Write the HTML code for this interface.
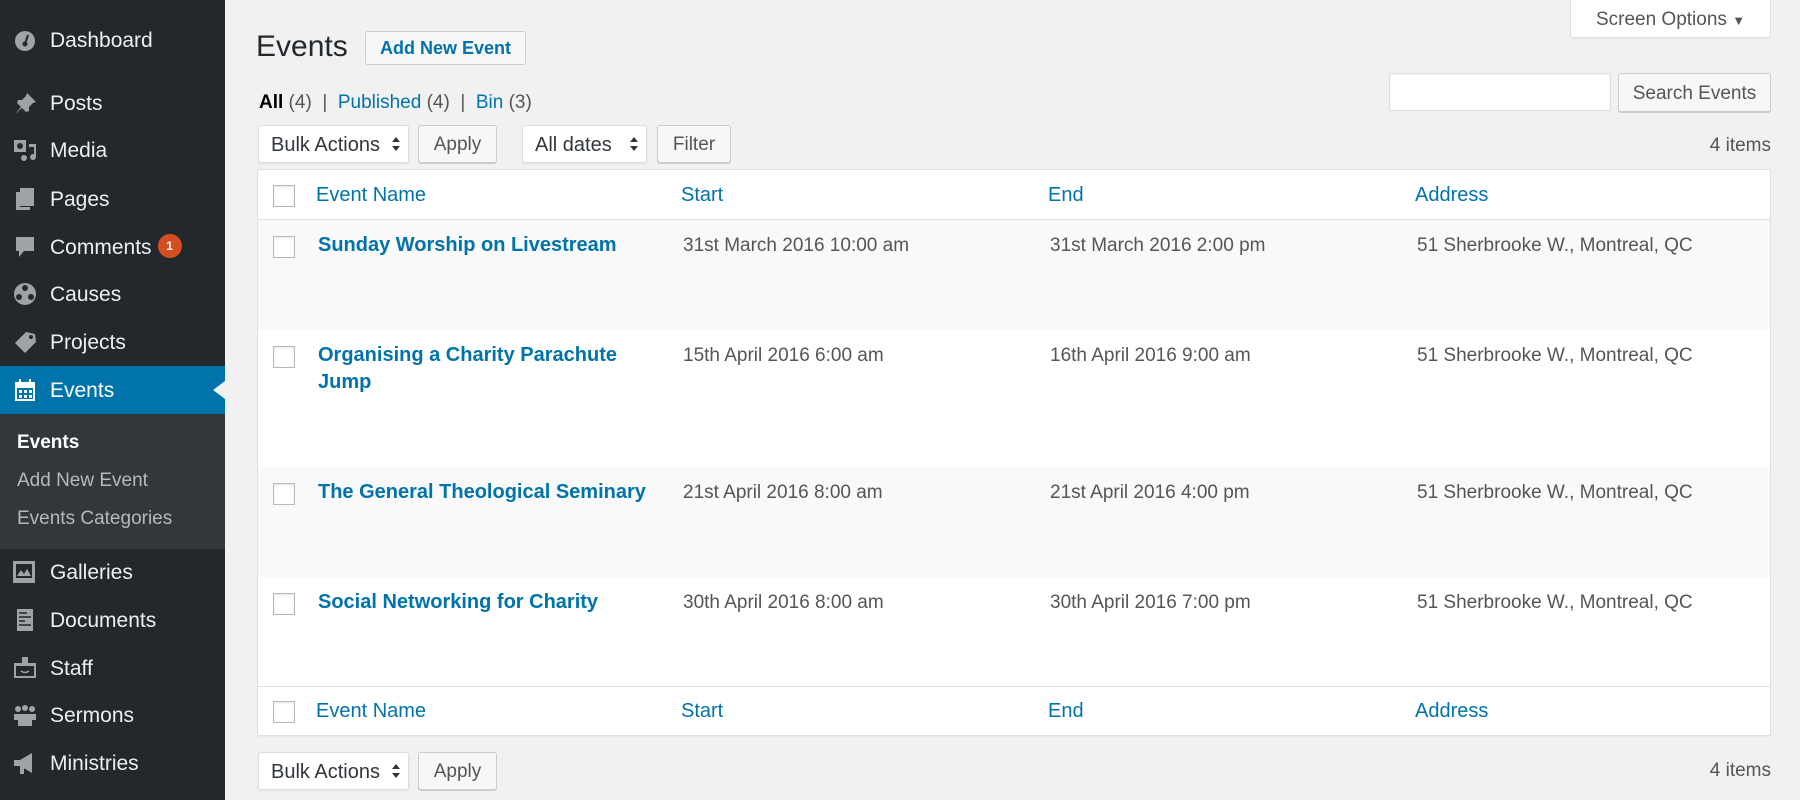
<!DOCTYPE html>
<html><head><meta charset="utf-8"><style>
*{box-sizing:border-box;margin:0;padding:0}
body{width:1800px;height:800px;overflow:hidden;background:#f1f1f1;font-family:"Liberation Sans",sans-serif;font-size:15px;color:#444;position:relative}
#side{position:absolute;left:0;top:0;width:225px;height:800px;background:#23282d}
.mi{position:absolute;left:0;width:225px;height:48px;color:#eee;font-size:21px;line-height:50px;padding-left:50px}
.mi .ic{position:absolute;left:13px;top:13px;width:24px;height:22px;color:#9ea3a8}
.cur{background:#0073aa;color:#fff}
.cur .ic{color:#fff}
#sub{position:absolute;left:0;top:414px;width:225px;height:135px;background:#32373c}
.si{position:absolute;left:17px;font-size:19px;color:#b4b9be}
.badge{display:inline-block;width:24px;height:24px;border-radius:12px;background:#d54e21;color:#fff;font-size:12px;font-weight:bold;text-align:center;line-height:24px;vertical-align:middle;margin-left:6px;position:relative;top:-2px}
a{color:#0073aa;text-decoration:none}
.btn{position:absolute;border:1px solid #ccc;background:#f7f7f7;border-radius:3px;box-shadow:0 1px 0 #ccc;color:#555;font-size:19px;text-align:center}
.sel{position:absolute;border:1px solid #ddd;background:#fff;border-radius:3px;box-shadow:0 1px 2px rgba(0,0,0,.07);color:#32373c;font-size:20px;padding-left:12px}
.sel:after{content:"";position:absolute;right:8px;top:50%;margin-top:-7px;border-left:4px solid transparent;border-right:4px solid transparent;border-bottom:5px solid #333}
.sel:before{content:"";position:absolute;right:8px;top:50%;margin-top:2px;border-left:4px solid transparent;border-right:4px solid transparent;border-top:5px solid #333}
#tbl{position:absolute;left:257px;top:169px;width:1514px;height:567px;background:#fff;border:1px solid #e1e1e1;box-shadow:0 1px 1px rgba(0,0,0,.04)}
.row{position:absolute;left:0;width:1512px}
.cb{position:absolute;left:15px;width:22px;height:22px;border:1px solid #b4b9be;background:#fff;box-shadow:inset 0 1px 2px rgba(0,0,0,.1)}
.c{position:absolute;font-size:19px}
.hd{color:#0073aa;font-size:20px}
.t{font-weight:bold;color:#0073aa;font-size:20px;line-height:27px;width:330px}
.d{color:#555;font-size:19px}
</style></head><body>
<div id="side">
 <div class="mi" style="top:16px">Dashboard<svg class="ic" viewBox="0 0 24 22"><circle cx="12" cy="12" r="10" fill="currentColor"/><circle cx="12" cy="15" r="2.5" fill="#23282d"/><path d="M12 15L15 6" stroke="#23282d" stroke-width="2"/></svg></div>
 <div class="mi" style="top:79px">Posts<svg class="ic" viewBox="0 0 24 22"><path d="M14 1l9 9-3 1-4 4 0 4-3 1-4-4-7 6 6-7-4-4 1-3 4 0 4-4z" fill="currentColor"/></svg></div>
 <div class="mi" style="top:126px">Media<svg class="ic" viewBox="0 0 24 22"><rect x="1" y="1" width="12" height="12" fill="currentColor"/><circle cx="7" cy="7" r="3" fill="#23282d"/><circle cx="11" cy="19" r="3" fill="currentColor"/><circle cx="20" cy="18" r="3" fill="currentColor"/><rect x="16" y="5" width="6" height="3" fill="currentColor"/><rect x="21" y="5" width="2" height="13" fill="currentColor"/></svg></div>
 <div class="mi" style="top:175px">Pages<svg class="ic" viewBox="0 0 24 22"><rect x="7" y="0" width="14" height="18" fill="currentColor"/><rect x="3" y="4" width="4" height="18" fill="currentColor"/><rect x="3" y="19" width="14" height="3" fill="currentColor"/></svg></div>
 <div class="mi" style="top:223px">Comments<span class="badge">1</span><svg class="ic" viewBox="0 0 24 22"><path d="M3 1h18v14h-10l-5 6v-6h-3z" fill="currentColor"/></svg></div>
 <div class="mi" style="top:270px">Causes<svg class="ic" viewBox="0 0 24 22"><circle cx="12" cy="11" r="11" fill="currentColor"/><circle cx="12" cy="5" r="3" fill="#23282d"/><circle cx="6" cy="14" r="3" fill="#23282d"/><circle cx="18" cy="14" r="3" fill="#23282d"/></svg></div>
 <div class="mi" style="top:318px">Projects<svg class="ic" viewBox="0 0 24 22"><path d="M2 12L13 1l9 2 1 8-11 11z" fill="currentColor"/><circle cx="18" cy="6" r="2" fill="#23282d"/></svg></div>
 <div class="mi cur" style="top:366px">Events<svg class="ic" viewBox="0 0 24 22"><rect x="2" y="3" width="20" height="19" fill="currentColor"/><rect x="4" y="9" width="16" height="11" fill="#0073aa"/><path d="M6 11h3v3h-3zM11 11h3v3h-3zM16 11h3v3h-3zM6 16h3v3h-3zM11 16h3v3h-3zM16 16h3v3h-3z" fill="#fff"/><rect x="6" y="0" width="2" height="5" fill="#fff"/><rect x="16" y="0" width="2" height="5" fill="#fff"/></svg></div>
 <div style="position:absolute;left:213px;top:381px;border-top:9px solid transparent;border-bottom:9px solid transparent;border-right:12px solid #f1f1f1"></div>
 <div id="sub">
  <div class="si" style="top:18px;color:#fff;font-weight:bold">Events</div>
  <div class="si" style="top:56px">Add New Event</div>
  <div class="si" style="top:94px">Events Categories</div>
 </div>
 <div class="mi" style="top:548px">Galleries<svg class="ic" viewBox="0 0 24 22"><rect x="0" y="0" width="22" height="22" fill="currentColor"/><rect x="3" y="3" width="16" height="14" fill="#23282d"/><path d="M4 15l4-6 3 4 3-5 4 7z" fill="currentColor"/></svg></div>
 <div class="mi" style="top:596px">Documents<svg class="ic" viewBox="0 0 24 22"><rect x="4" y="0" width="16" height="22" fill="currentColor"/><path d="M6 4h8M6 8h12M6 12h6M6 16h12" stroke="#23282d" stroke-width="1.5"/></svg></div>
 <div class="mi" style="top:644px">Staff<svg class="ic" viewBox="0 0 24 22"><rect x="1" y="6" width="22" height="15" fill="currentColor"/><rect x="3" y="9" width="18" height="10" fill="#23282d"/><rect x="9" y="0" width="6" height="8" fill="currentColor"/><path d="M8 14q4 3 8 0" stroke="currentColor" fill="none" stroke-width="1.5"/></svg></div>
 <div class="mi" style="top:691px">Sermons<svg class="ic" viewBox="0 0 24 22"><circle cx="5" cy="5" r="3" fill="currentColor"/><circle cx="12" cy="4" r="3" fill="currentColor"/><circle cx="19" cy="5" r="3" fill="currentColor"/><path d="M1 10h22v6h-4v6h-14v-6h-4z" fill="currentColor"/></svg></div>
 <div class="mi" style="top:739px">Ministries<svg class="ic" viewBox="0 0 24 22"><path d="M1 8h6l12-7v20l-12-7h-6z" fill="currentColor"/><rect x="7" y="14" width="4" height="8" fill="currentColor"/></svg></div>
</div>

<div style="position:absolute;left:256px;top:30px;font-size:30px;color:#23282d">Events</div>
<div class="btn" style="left:365px;top:31px;width:161px;height:34px;line-height:32px;color:#0073aa;font-weight:bold;font-size:18px;box-shadow:none;border-color:#ccc">Add New Event</div>

<div class="btn" style="left:1570px;top:-3px;width:201px;height:41px;line-height:44px;background:#fff;border-color:#ddd;box-shadow:0 1px 1px rgba(0,0,0,.04)">Screen Options <span style="font-size:13px">▼</span></div>

<div style="position:absolute;left:259px;top:92px;font-size:19px;color:#555"><b style="color:#000">All</b> (4) &nbsp;| &nbsp;<a>Published</a> (4) &nbsp;| &nbsp;<a>Bin</a> (3)</div>

<div style="position:absolute;left:1389px;top:73px;width:222px;height:38px;background:#fff;border:1px solid #ddd;box-shadow:inset 0 1px 2px rgba(0,0,0,.07)"></div>
<div class="btn" style="left:1618px;top:73px;width:153px;height:39px;line-height:39px">Search Events</div>

<div class="sel" style="left:258px;top:125px;width:151px;height:38px;line-height:38px">Bulk Actions</div>
<div class="btn" style="left:418px;top:125px;width:79px;height:38px;line-height:38px">Apply</div>
<div class="sel" style="left:522px;top:125px;width:125px;height:38px;line-height:38px">All dates</div>
<div class="btn" style="left:657px;top:125px;width:74px;height:38px;line-height:38px">Filter</div>
<div style="position:absolute;right:29px;top:135px;font-size:19px;color:#555">4 items</div>

<div id="tbl">
 <div class="row" style="top:0;height:50px;border-bottom:1px solid #e1e1e1"><div class="cb" style="top:15px"></div>
  <div class="c hd" style="left:58px;top:14px">Event Name</div><div class="c hd" style="left:423px;top:14px">Start</div><div class="c hd" style="left:790px;top:14px">End</div><div class="c hd" style="left:1157px;top:14px">Address</div></div>
 <div class="row" style="top:50px;height:110px;background:#f9f9f9"><div class="cb" style="top:16px"></div>
  <div class="c t" style="left:60px;top:12px">Sunday Worship on Livestream</div><div class="c d" style="left:425px;top:15px">31st March 2016 10:00 am</div><div class="c d" style="left:792px;top:15px">31st March 2016 2:00 pm</div><div class="c d" style="left:1159px;top:15px">51 Sherbrooke W., Montreal, QC</div></div>
 <div class="row" style="top:160px;height:137px;background:#fff"><div class="cb" style="top:16px"></div>
  <div class="c t" style="left:60px;top:12px">Organising a Charity Parachute Jump</div><div class="c d" style="left:425px;top:15px">15th April 2016 6:00 am</div><div class="c d" style="left:792px;top:15px">16th April 2016 9:00 am</div><div class="c d" style="left:1159px;top:15px">51 Sherbrooke W., Montreal, QC</div></div>
 <div class="row" style="top:297px;height:110px;background:#f9f9f9"><div class="cb" style="top:16px"></div>
  <div class="c t" style="left:60px;top:12px">The General Theological Seminary</div><div class="c d" style="left:425px;top:15px">21st April 2016 8:00 am</div><div class="c d" style="left:792px;top:15px">21st April 2016 4:00 pm</div><div class="c d" style="left:1159px;top:15px">51 Sherbrooke W., Montreal, QC</div></div>
 <div class="row" style="top:407px;height:110px;background:#fff"><div class="cb" style="top:16px"></div>
  <div class="c t" style="left:60px;top:12px">Social Networking for Charity</div><div class="c d" style="left:425px;top:15px">30th April 2016 8:00 am</div><div class="c d" style="left:792px;top:15px">30th April 2016 7:00 pm</div><div class="c d" style="left:1159px;top:15px">51 Sherbrooke W., Montreal, QC</div></div>
 <div class="row" style="top:516px;height:49px;border-top:1px solid #e1e1e1"><div class="cb" style="top:14px"></div>
  <div class="c hd" style="left:58px;top:13px">Event Name</div><div class="c hd" style="left:423px;top:13px">Start</div><div class="c hd" style="left:790px;top:13px">End</div><div class="c hd" style="left:1157px;top:13px">Address</div></div>
</div>

<div class="sel" style="left:258px;top:752px;width:151px;height:38px;line-height:38px">Bulk Actions</div>
<div class="btn" style="left:418px;top:752px;width:79px;height:38px;line-height:38px">Apply</div>
<div style="position:absolute;right:29px;top:760px;font-size:19px;color:#555">4 items</div>
</body></html>
